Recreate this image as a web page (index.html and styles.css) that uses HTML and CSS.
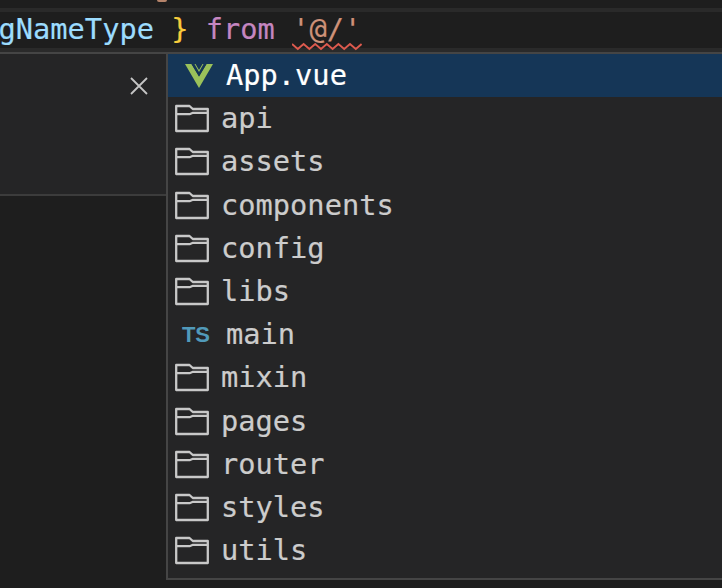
FILE: index.html
```html
<!DOCTYPE html>
<html lang="en">
<head>
<meta charset="utf-8">
<title>Path suggestions</title>
<link rel="stylesheet" href="styles.css">
</head>
<body>
<svg class="defs" width="0" height="0" aria-hidden="true">
  <symbol id="folder" viewBox="0 0 34 29">
    <path d="M1.2 2H14.5L17.8 5H32.8V27H1.2ZM1.2 10.2H14.5L18 8.8H32.8" fill="none" stroke="#c8c8c8" stroke-width="2.3" stroke-linejoin="round"/>
  </symbol>
</svg>
<div class="strip-top"><span class="descender"></span></div>
<div class="code-line"><span class="type">gNameType</span> <span class="brace">}</span> <span class="kw">from</span> <span class="str">'@/'<svg class="squiggle" width="70" height="9" viewBox="0 0 70 9"><path d="M0 2L5.8 7L11.6 2L17.4 7L23.2 2L29 7L34.8 2L40.6 7L46.4 2L52.2 7L58 2L63.8 7L69.6 2" fill="none" stroke="#dd5a4e" stroke-width="1.9"/></svg></span></div>
<div class="strip-bottom"></div>
<main class="workspace">
  <aside class="left">
    <div class="panel">
      <svg class="close" width="20" height="20" viewBox="0 0 20 20"><path d="M2 2L18 18M18 2L2 18" stroke="#c5c5c5" stroke-width="1.8" fill="none"/></svg>
    </div>
  </aside>
  <ul class="suggest">
    <li class="row selected file">
      <svg class="vue" width="28" height="24" viewBox="0 0 28 24"><path d="M0 0H6.5L14 12.5L21.5 0H28L14 24Z" fill="#9ac15a"/><path d="M6.5 0H10.5L14 6L17.5 0H21.5L14 12.5Z" fill="#153657"/><path d="M9.5 0H10.5L14 6L17.5 0H18.5L14 8Z" fill="#9ac15a"/></svg>
      <span class="label">App.vue</span>
    </li>
    <li class="row"><svg class="folder"><use href="#folder"/></svg><span class="label">api</span></li>
    <li class="row"><svg class="folder"><use href="#folder"/></svg><span class="label">assets</span></li>
    <li class="row"><svg class="folder"><use href="#folder"/></svg><span class="label">components</span></li>
    <li class="row"><svg class="folder"><use href="#folder"/></svg><span class="label">config</span></li>
    <li class="row"><svg class="folder"><use href="#folder"/></svg><span class="label">libs</span></li>
    <li class="row file"><span class="ts">TS</span><span class="label">main</span></li>
    <li class="row"><svg class="folder"><use href="#folder"/></svg><span class="label">mixin</span></li>
    <li class="row"><svg class="folder"><use href="#folder"/></svg><span class="label">pages</span></li>
    <li class="row"><svg class="folder"><use href="#folder"/></svg><span class="label">router</span></li>
    <li class="row"><svg class="folder"><use href="#folder"/></svg><span class="label">styles</span></li>
    <li class="row"><svg class="folder"><use href="#folder"/></svg><span class="label">utils</span></li>
  </ul>
</main>
</body>
</html>
```

FILE: styles.css
```css
* { box-sizing: border-box; }
html, body {
  margin: 0;
  width: 722px;
  height: 588px;
  overflow: hidden;
  background: #1e1e1e;
  font-family: "DejaVu Sans Mono", "Liberation Mono", monospace;
}
.defs { position: absolute; }
.strip-top {
  height: 12px;
  background: #1e1e1e;
  border-bottom: 4px solid #2a2a2a;
  padding-left: 157px;
}
.descender {
  display: block;
  width: 10px;
  height: 2px;
  background: #b5836a;
  border-radius: 0 0 5px 5px;
}
.code-line {
  height: 36px;
  margin-left: -1.5px;
  white-space: pre;
  font-size: 28.7px;
  line-height: 35px;
  background: #1e1e1e;
  -webkit-text-stroke: 0.2px currentColor;
}
.type { color: #9cdcfe; }
.brace { color: #f7cc3c; }
.kw { color: #c586c0; }
.str { color: #ce9178; position: relative; display: inline-block; }
.squiggle { position: absolute; left: 0; top: 30px; }
.strip-bottom {
  height: 6px;
  background: #2a2a2a;
  border-bottom: 2px solid #454545;
}
.workspace {
  display: flex;
  align-items: flex-start;
  height: 534px;
}
.left { width: 166px; flex: none; }
.panel {
  height: 142px;
  background: #252526;
  border-bottom: 2px solid #3c3c3c;
  display: flex;
  justify-content: flex-end;
  padding: 22px 17px 0 0;
}
.close { display: block; }
.suggest {
  flex: 1;
  list-style: none;
  margin: 0;
  padding: 0 0 6px;
  background: #252526;
  border-left: 2px solid #454545;
  border-bottom: 2px solid #454545;
}
.row {
  height: 43.2px;
  display: flex;
  align-items: center;
  padding-left: 7px;
  color: #cccccc;
  font-size: 28.7px;
  white-space: pre;
  -webkit-text-stroke: 0.2px currentColor;
}
.row.selected { background: #153657; color: #ffffff; }
.folder { width: 34px; height: 29px; flex: none; margin-right: 12px; }
.label { display: block; margin-top: -1px; }
.vue { flex: none; margin-left: 10px; margin-right: 13px; }
.ts {
  width: 44px;
  margin-left: 7px;
  flex: none;
  font-family: "Liberation Sans", Arial, sans-serif;
  font-weight: 700;
  font-size: 22px;
  letter-spacing: -0.2px;
  color: #519aba;
  -webkit-text-stroke: 0;
}
```
